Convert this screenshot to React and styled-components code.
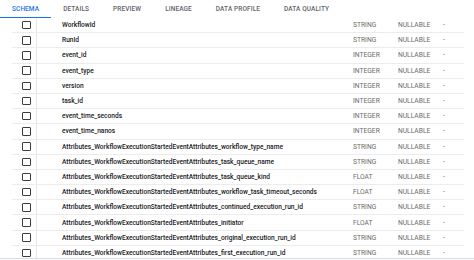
import React from "react";
import styled, { createGlobalStyle } from "styled-components";

const Global = createGlobalStyle`
  html, body { margin: 0; padding: 0; background: #fff; }
  body { font-family: Roboto, "Liberation Sans", Arial, sans-serif; overflow: hidden; }
`;

const Page = styled.div`
  width: 474px;
  height: 258px;
  overflow: hidden;
  border-bottom: 1px solid #dadce0;
  display: flex;
  flex-direction: column;
`;

const Tabs = styled.div`
  display: flex;
  height: 18px;
  flex: none;
`;

const Tab = styled.div`
  display: flex;
  align-items: center;
  justify-content: center;
  padding: 0 12px;
  height: 18px;
  box-sizing: border-box;
  font-size: 6.5px;
  font-weight: 500;
  letter-spacing: 0.1px;
  color: ${(p) => (p.$active ? "#1a73e8" : "#5f6368")};
  border-bottom: 1.5px solid ${(p) => (p.$active ? "#1a73e8" : "transparent")};
  padding-top: 1px;
`;

const Table = styled.div`
  margin-left: 12px;
  width: 452px;
`;

const Row = styled.div`
  display: grid;
  grid-template-columns: 25px 316px 45px 45px 21px;
  height: 15.2px;
  box-sizing: border-box;
  border-bottom: 1px solid #ececec;
  align-items: stretch;
`;

const CheckCell = styled.div`
  display: flex;
  align-items: center;
  justify-content: center;
  border-right: 1px solid #e6e6e6;
  padding-left: 5px;
`;

const Box = styled.div`
  width: 8.5px;
  height: 8.5px;
  box-sizing: border-box;
  border: 1.5px solid #3c3c3c;
  border-radius: 1px;
`;

const Name = styled.div`
  display: flex;
  align-items: center;
  padding-left: 25px;
  font-size: 6.6px;
  font-weight: 500;
  color: #202124;
  white-space: nowrap;
  overflow: hidden;
`;

const Cell = styled.div`
  display: flex;
  align-items: center;
  font-size: 6.7px;
  color: #6b6b6b;
  white-space: nowrap;
`;

const tabs = ["SCHEMA", "DETAILS", "PREVIEW", "LINEAGE", "DATA PROFILE", "DATA QUALITY"];

const A = "Attributes_WorkflowExecutionStartedEventAttributes_";
const rows = [
  ["WorkflowId", "STRING"],
  ["RunId", "STRING"],
  ["event_id", "INTEGER"],
  ["event_type", "INTEGER"],
  ["version", "INTEGER"],
  ["task_id", "INTEGER"],
  ["event_time_seconds", "INTEGER"],
  ["event_time_nanos", "INTEGER"],
  [A + "workflow_type_name", "STRING"],
  [A + "task_queue_name", "STRING"],
  [A + "task_queue_kind", "FLOAT"],
  [A + "workflow_task_timeout_seconds", "FLOAT"],
  [A + "continued_execution_run_id", "STRING"],
  [A + "initiator", "FLOAT"],
  [A + "original_execution_run_id", "STRING"],
  [A + "first_execution_run_id", "STRING"],
];

export default function App() {
  return (
    <>
      <Global />
      <Page>
        <Tabs>
          {tabs.map((t, i) => (
            <Tab key={t} $active={i === 0}>
              {t}
            </Tab>
          ))}
        </Tabs>
        <Table>
          {rows.map(([n, t]) => (
            <Row key={n}>
              <CheckCell>
                <Box />
              </CheckCell>
              <Name>{n}</Name>
              <Cell>{t}</Cell>
              <Cell>NULLABLE</Cell>
              <Cell>-</Cell>
            </Row>
          ))}
        </Table>
      </Page>
    </>
  );
}
